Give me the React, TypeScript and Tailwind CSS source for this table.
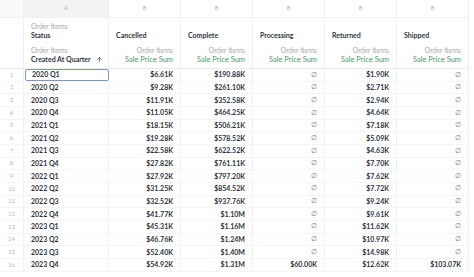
import { ArrowUp } from 'lucide-react';

const rows: [string, string, string, string, string, string][] = [
  ['2020 Q1', '$6.61K', '$190.88K', '∅', '$1.90K', '∅'],
  ['2020 Q2', '$9.28K', '$261.10K', '∅', '$2.71K', '∅'],
  ['2020 Q3', '$11.91K', '$352.58K', '∅', '$2.94K', '∅'],
  ['2020 Q4', '$11.05K', '$464.25K', '∅', '$4.64K', '∅'],
  ['2021 Q1', '$18.15K', '$506.21K', '∅', '$7.18K', '∅'],
  ['2021 Q2', '$19.28K', '$578.52K', '∅', '$5.09K', '∅'],
  ['2021 Q3', '$22.58K', '$622.52K', '∅', '$4.63K', '∅'],
  ['2021 Q4', '$27.82K', '$761.11K', '∅', '$7.70K', '∅'],
  ['2022 Q1', '$27.92K', '$797.20K', '∅', '$7.62K', '∅'],
  ['2022 Q2', '$31.25K', '$854.52K', '∅', '$7.72K', '∅'],
  ['2022 Q3', '$32.52K', '$937.76K', '∅', '$9.24K', '∅'],
  ['2022 Q4', '$41.77K', '$1.10M', '∅', '$9.61K', '∅'],
  ['2023 Q1', '$45.31K', '$1.16M', '∅', '$11.62K', '∅'],
  ['2023 Q2', '$46.76K', '$1.24M', '∅', '$10.97K', '∅'],
  ['2023 Q3', '$52.40K', '$1.40M', '∅', '$14.98K', '∅'],
  ['2023 Q4', '$54.92K', '$1.31M', '$60.00K', '$12.62K', '$103.07K'],
];

const statuses = ['Cancelled', 'Complete', 'Processing', 'Returned', 'Shipped'];

const grid = 'grid grid-cols-[24px_85px_repeat(5,72px)] w-[469px]';

const App = () => {
  return (
    <div className="w-[474px] h-[277px] bg-white overflow-hidden font-['Lato','Liberation_Sans',sans-serif] text-[#2e353b]">
      <div className={`${grid} h-[18px] border-b border-[#eef0f2]`}>
        <div className="bg-[#f9fafb] border-r border-[#eef0f2]" />
        <div className="bg-[#f1f3f5] border-r border-[#eef0f2] flex items-center justify-center text-[5.5px] text-[#a9aeb3]">A</div>
        {statuses.map((s) => (
          <div key={s} className="border-r border-[#eef0f2] flex items-center justify-center text-[5.5px] text-[#a9aeb3]">B</div>
        ))}
      </div>

      <div className={`${grid} h-[26px]`}>
        <div className="border-r border-[#eef0f2]" />
        <div className="border-r border-[#eef0f2] flex flex-col justify-end pl-[7px] pb-[4px] leading-[9px]">
          <span className="text-[7px] text-[#a5aaaf]">Order Items</span>
          <span className="text-[7px] font-bold">Status</span>
        </div>
        {statuses.map((s) => (
          <div key={s} className="border-r border-[#eef0f2] flex items-end pl-[7px] pb-[4px] leading-[9px]">
            <span className="text-[7px] font-bold">{s}</span>
          </div>
        ))}
      </div>

      <div className={`${grid} h-[25px] border-b border-[#e8eaec]`}>
        <div className="border-r border-[#eef0f2]" />
        <div className="border-r border-[#eef0f2] flex flex-col justify-end pl-[7px] pb-[4px] leading-[9px]">
          <span className="text-[7px] text-[#a5aaaf]">Order Items</span>
          <span className="flex items-center text-[7px] font-bold">
            Created At Quarter
            <ArrowUp size={7} strokeWidth={2.2} className="ml-[5px]" />
          </span>
        </div>
        {statuses.map((s) => (
          <div key={s} className="border-r border-[#eef0f2] flex flex-col items-end justify-end pr-[7px] pb-[4px] leading-[9px]">
            <span className="text-[7px] text-[#a5aaaf]">Order Items</span>
            <span className="text-[7.5px] text-[#4c9a6c]">Sale Price Sum</span>
          </div>
        ))}
      </div>

      {rows.map((r, i) => (
        <div key={r[0]} className={`${grid} h-[12.67px] border-b border-[#f4f5f6] text-[7px] font-bold leading-none`}>
          <div className="border-r border-[#eef0f2] flex items-center justify-center text-[6px] font-normal text-[#b3b8bd]">{i + 1}</div>
          <div className={`flex items-center ${i === 0 ? 'border border-[#8396b8] rounded-[2px] ml-px pl-[6px]' : 'border-r border-[#eef0f2] pl-[7px]'}`}>{r[0]}</div>
          {r.slice(1).map((v, j) => (
            <div key={j} className={`border-r border-[#eef0f2] flex items-center justify-end pr-[7px] ${v === '∅' ? 'text-[6.5px] font-normal text-[#7d848b]' : ''}`}>{v}</div>
          ))}
        </div>
      ))}
    </div>
  );
};

export default App;
